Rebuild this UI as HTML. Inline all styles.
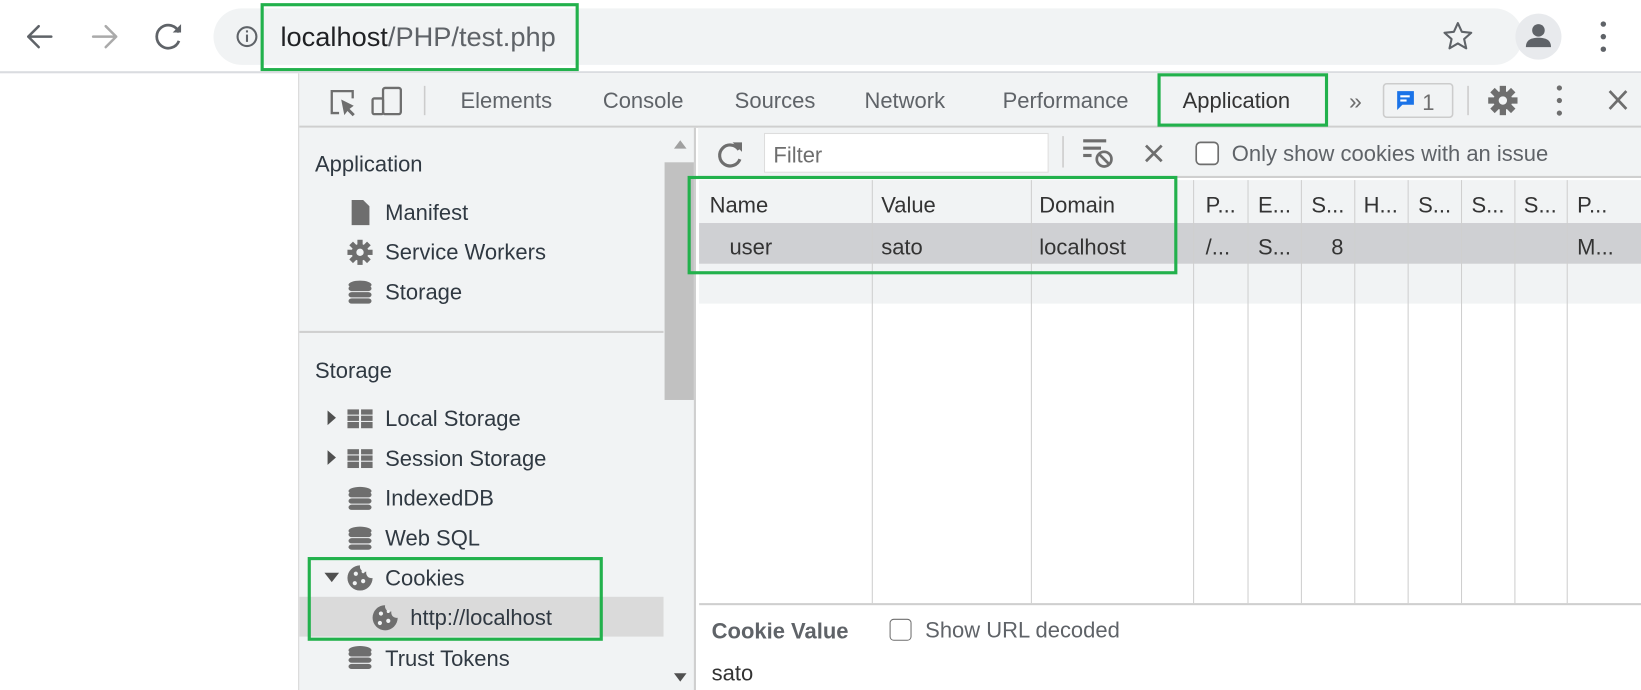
<!DOCTYPE html>
<html><head><meta charset="utf-8"><style>
*{box-sizing:border-box;margin:0;padding:0}
html,body{width:1641px;height:690px;overflow:hidden;background:#fff}
#c{position:absolute;left:0;top:0;width:1568px;height:659px;transform:scale(1.04656,1.04704);transform-origin:0 0;font-family:"Liberation Sans",sans-serif;color:#303942;font-size:21px}
.a{position:absolute}
.t{position:absolute;white-space:nowrap;line-height:24px}
.g{position:absolute;border:3px solid #22b14c}
.vl{position:absolute;top:172px;height:405px;width:1px;background:#cfcfcf}
</style></head><body><div id="c">
<!-- top bar -->
<svg class="a" style="left:0;top:0" width="1568" height="70">
<g fill="none" stroke="#5f6368" stroke-width="2.4" stroke-linecap="round" stroke-linejoin="round">
<path d="M27 35h22M37 25l-10 10 10 10"/>
</g>
<g fill="none" stroke="#aaa" stroke-width="2.4" stroke-linecap="round" stroke-linejoin="round"><path d="M89 35h22M101 25l10 10-10 10"/></g>
<path d="M171 31a11 11 0 1 0 0 8" fill="none" stroke="#5f6368" stroke-width="2.6"/>
<path d="M165 24l8 0 0 -8z" fill="#5f6368" transform="translate(0,7)"/>
<rect x="204" y="8" width="1251" height="54" rx="27" fill="#f1f3f4"/>
<circle cx="236" cy="35" r="9" fill="none" stroke="#5f6368" stroke-width="2"/>
<rect x="235" y="33" width="2" height="7" fill="#5f6368"/><rect x="235" y="29" width="2" height="2" fill="#5f6368"/>
<path d="M1393 22l3.8 8.4 9 .9-6.8 6 2 8.9-8-4.7-8 4.7 2-8.9-6.8-6 9-.9z" fill="none" stroke="#5f6368" stroke-width="2" stroke-linejoin="round"/>
<circle cx="1470" cy="35" r="22" fill="#e8eaed"/>
<circle cx="1470" cy="29" r="6" fill="#5f6368"/><path d="M1458 45c0-7 5-9 12-9s12 2 12 9z" fill="#5f6368"/>
<circle cx="1532" cy="23" r="2.6" fill="#5f6368"/><circle cx="1532" cy="35" r="2.6" fill="#5f6368"/><circle cx="1532" cy="47" r="2.6" fill="#5f6368"/>
</svg>
<div class="t" style="left:268px;top:21px;font-size:26px;line-height:28px;color:#202124">localhost<span style="color:#5f6368">/PHP/test.php</span></div>
<div class="g" style="left:249px;top:3px;width:304px;height:65px"></div>
<div class="a" style="left:0;top:68px;width:1568px;height:2px;background:#dadce0"></div>
<!-- devtools -->
<div class="a" style="left:285px;top:70px;width:1283px;height:589px;background:#fff;border-left:1px solid #cfcfcf"></div>
<div class="a" style="left:286px;top:70px;width:1282px;height:52px;background:#f1f3f4;border-bottom:2px solid #cfcfcf"></div>
<svg class="a" style="left:286px;top:70px" width="1282" height="52">
<path d="M38 38h-7v-21h20v7" fill="none" stroke="#6e6e6e" stroke-width="2.2"/>
<path d="M40 25l3 15 3-4 5 5 2-2-5-5 4-3z" fill="#6e6e6e"/>
<rect x="80" y="14" width="17" height="25" rx="2" fill="none" stroke="#6e6e6e" stroke-width="2.2"/>
<rect x="70" y="24" width="10" height="15" rx="1.5" fill="#f1f3f4" stroke="#6e6e6e" stroke-width="2.2"/>
<rect x="119" y="12" width="1.5" height="28" fill="#ccc"/>
<text x="1003" y="34" font-size="22" fill="#6e6e6e" font-family="Liberation Sans">»</text>
<rect x="1036" y="10" width="66" height="32" rx="3" fill="#f1f3f4" stroke="#ccc" stroke-width="1.5"/>
<path d="M1049 17h16v13h-11l-5 5z" fill="#1a73e8"/><rect x="1052" y="21" width="9" height="2" fill="#fff"/><rect x="1052" y="25" width="6" height="2" fill="#fff"/>
<text x="1073" y="35" font-size="21" fill="#6e6e6e" font-family="Liberation Sans">1</text>
<rect x="1116" y="12" width="1.5" height="28" fill="#ccc"/>
<g transform="translate(1150,26)" fill="#6e6e6e"><circle r="9"/><rect x="-3" y="-14" width="6" height="28"/><rect x="-3" y="-14" width="6" height="28" transform="rotate(45)"/><rect x="-3" y="-14" width="6" height="28" transform="rotate(90)"/><rect x="-3" y="-14" width="6" height="28" transform="rotate(135)"/><circle r="4" fill="#f1f3f4"/></g>
<circle cx="1204" cy="14" r="2.5" fill="#6e6e6e"/><circle cx="1204" cy="26" r="2.5" fill="#6e6e6e"/><circle cx="1204" cy="38" r="2.5" fill="#6e6e6e"/>
<path d="M1252 17l16 17M1268 17l-16 17" stroke="#6e6e6e" stroke-width="2.6"/>
</svg>
<div class="t" style="left:440px;top:85px;color:#5f6368">Elements</div>
<div class="t" style="left:576px;top:85px;color:#5f6368">Console</div>
<div class="t" style="left:702px;top:85px;color:#5f6368">Sources</div>
<div class="t" style="left:826px;top:85px;color:#5f6368">Network</div>
<div class="t" style="left:958px;top:85px;color:#5f6368">Performance</div>
<div class="t" style="left:1130px;top:85px;color:#333">Application</div>
<div class="g" style="left:1106px;top:70px;width:163px;height:51px"></div>
<!-- sidebar -->
<div class="a" style="left:286px;top:122px;width:348px;height:537px;background:#f1f3f4"></div>
<div class="a" style="left:634px;top:122px;width:31px;height:537px;background:#f1f3f4;border-right:2px solid #cfcfcf"></div>
<div class="a" style="left:635px;top:155px;width:28px;height:227px;background:#c1c1c1"></div>
<svg class="a" style="left:634px;top:122px" width="31" height="537"><path d="M10 20l6-8 6 8z" fill="#a0a0a0"/><path d="M10 521l6 8 6-8z" fill="#505050"/></svg>
<div class="a" style="left:286px;top:316px;width:348px;height:2px;background:#cfcfcf"></div>
<div class="a" style="left:286px;top:570px;width:348px;height:38px;background:#dadada"></div>
<div class="t" style="left:301px;top:146px">Application</div>
<div class="t" style="left:368px;top:192px">Manifest</div>
<div class="t" style="left:368px;top:230px">Service Workers</div>
<div class="t" style="left:368px;top:268px">Storage</div>
<div class="t" style="left:301px;top:343px">Storage</div>
<div class="t" style="left:368px;top:389px">Local Storage</div>
<div class="t" style="left:368px;top:427px">Session Storage</div>
<div class="t" style="left:368px;top:465px">IndexedDB</div>
<div class="t" style="left:368px;top:503px">Web SQL</div>
<div class="t" style="left:368px;top:541px">Cookies</div>
<div class="t" style="left:392px;top:579px">http://localhost</div>
<div class="t" style="left:368px;top:618px">Trust Tokens</div>
<svg class="a" style="left:286px;top:122px" width="348" height="537">
<defs>
<g id="db" fill="#6e6e6e"><ellipse cx="0" cy="-8" rx="11" ry="4"/><rect x="-11" y="-7" width="22" height="5" rx="3"/><rect x="-11" y="-1" width="22" height="5" rx="3"/><rect x="-11" y="5" width="22" height="5" rx="3"/></g>
<g id="gr" fill="#6e6e6e"><rect x="-12" y="-9" width="11" height="5"/><rect x="1" y="-9" width="11" height="5"/><rect x="-12" y="-3" width="11" height="5"/><rect x="1" y="-3" width="11" height="5"/><rect x="-12" y="3" width="11" height="6"/><rect x="1" y="3" width="11" height="6"/></g>
<g id="ck"><path d="M0 -12a12 12 0 1 0 12 12a5 5 0 0 1 -6 -6a5 5 0 0 1 -6 -6z" fill="#6e6e6e"/><circle cx="-4" cy="-4" r="2" fill="#f1f3f4"/><circle cx="3" cy="3" r="2" fill="#f1f3f4"/><circle cx="-5" cy="5" r="2" fill="#f1f3f4"/><circle cx="3" cy="-6" r="1.5" fill="#f1f3f4"/></g>
</defs>
<path d="M50 69h11l6 6v18h-17z" fill="#6e6e6e"/>
<g transform="translate(58,119)" fill="#6e6e6e"><circle r="8"/><rect x="-2.5" y="-12" width="5" height="24"/><rect x="-2.5" y="-12" width="5" height="24" transform="rotate(45)"/><rect x="-2.5" y="-12" width="5" height="24" transform="rotate(90)"/><rect x="-2.5" y="-12" width="5" height="24" transform="rotate(135)"/><circle r="3.5" fill="#f1f3f4"/></g>
<use href="#db" x="58" y="158"/>
<path d="M27 270l8 7-8 7z" fill="#505050"/><use href="#gr" x="58" y="278"/>
<path d="M27 308l8 7-8 7z" fill="#505050"/><use href="#gr" x="58" y="316"/>
<use href="#db" x="58" y="355"/>
<use href="#db" x="58" y="393"/>
<path d="M24 425l7 9 7-9z" fill="#505050"/><use href="#ck" x="58" y="430"/>
<use href="#ck" x="82" y="468"/>
<use href="#db" x="58" y="507"/>
</svg>
<div class="g" style="left:294px;top:532px;width:282px;height:80px"></div>
<!-- main toolbar -->
<div class="a" style="left:667px;top:122px;width:901px;height:48px;background:#f1f3f4;border-bottom:2px solid #cfcfcf"></div>
<svg class="a" style="left:667px;top:122px" width="901" height="48">
<path d="M39 21a10 10 0 1 0 1 9" fill="none" stroke="#6e6e6e" stroke-width="3"/><path d="M33 14h9v9z" fill="#6e6e6e"/>
<rect x="348" y="8" width="1.5" height="30" fill="#ccc"/>
<rect x="368" y="11" width="22" height="3" fill="#6e6e6e"/><rect x="368" y="18" width="17" height="3" fill="#6e6e6e"/><rect x="368" y="25" width="8" height="3" fill="#6e6e6e"/>
<circle cx="388" cy="30" r="7" fill="none" stroke="#6e6e6e" stroke-width="2.6"/><path d="M383 25l10 10" stroke="#6e6e6e" stroke-width="2.6"/>
<path d="M428 17l15 15M443 17l-15 15" stroke="#6e6e6e" stroke-width="2.6"/>
<rect x="476" y="14" width="21" height="21" rx="4" fill="#fff" stroke="#6e6e6e" stroke-width="1.6"/>
</svg>
<div class="a" style="left:730px;top:127px;width:272px;height:38px;background:#fff;border:1px solid #ddd"></div>
<div class="t" style="left:739px;top:137px;color:#6e6e6e">Filter</div>
<div class="t" style="left:1177px;top:136px;color:#5f6368">Only show cookies with an issue</div>
<!-- table -->
<div class="a" style="left:668px;top:172px;width:900px;height:41px;background:#f1f3f4"></div>
<div class="a" style="left:668px;top:213px;width:900px;height:39px;background:#cfd0d3"></div>
<div class="a" style="left:668px;top:252px;width:900px;height:38px;background:#f1f3f4"></div>
<div class="vl" style="left:833px"></div><div class="vl" style="left:985px"></div><div class="vl" style="left:1140px"></div><div class="vl" style="left:1192px"></div><div class="vl" style="left:1243px"></div><div class="vl" style="left:1294px"></div><div class="vl" style="left:1345px"></div><div class="vl" style="left:1396px"></div><div class="vl" style="left:1447px"></div><div class="vl" style="left:1497px"></div>
<div class="t" style="left:678px;top:185px;color:#333">Name</div>
<div class="t" style="left:842px;top:185px;color:#333">Value</div>
<div class="t" style="left:993px;top:185px;color:#333">Domain</div>
<div class="t" style="left:1152px;top:185px;color:#333">P...</div>
<div class="t" style="left:1202px;top:185px;color:#333">E...</div>
<div class="t" style="left:1253px;top:185px;color:#333">S...</div>
<div class="t" style="left:1303px;top:185px;color:#333">H...</div>
<div class="t" style="left:1355px;top:185px;color:#333">S...</div>
<div class="t" style="left:1406px;top:185px;color:#333">S...</div>
<div class="t" style="left:1456px;top:185px;color:#333">S...</div>
<div class="t" style="left:1507px;top:185px;color:#333">P...</div>
<div class="t" style="left:697px;top:225px;color:#333">user</div>
<div class="t" style="left:842px;top:225px;color:#333">sato</div>
<div class="t" style="left:993px;top:225px;color:#333">localhost</div>
<div class="t" style="left:1152px;top:225px;color:#333">/...</div>
<div class="t" style="left:1202px;top:225px;color:#333">S...</div>
<div class="t" style="left:1272px;top:225px;color:#333">8</div>
<div class="t" style="left:1507px;top:225px;color:#333">M...</div>
<div class="g" style="left:657px;top:168px;width:468px;height:94px"></div>
<!-- bottom -->
<div class="a" style="left:668px;top:576px;width:900px;height:83px;background:#fff;border-top:2px solid #cfcfcf"></div>
<div class="t" style="left:680px;top:592px;font-weight:bold;color:#5f6368">Cookie Value</div>
<div class="a" style="left:850px;top:591px;width:21px;height:21px;border:1.6px solid #6e6e6e;border-radius:4px"></div>
<div class="t" style="left:884px;top:591px;color:#5f6368">Show URL decoded</div>
<div class="t" style="left:680px;top:632px;color:#333">sato</div>
</div></body></html>
